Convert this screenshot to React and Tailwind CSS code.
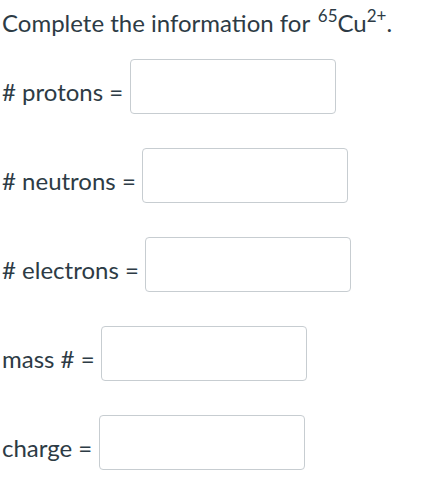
const rows = [
  { label: "# protons =", gap: "ml-[7px]" },
  { label: "# neutrons =", gap: "ml-[6px]" },
  { label: "# electrons =", gap: "ml-[6px]" },
  { label: "mass # =", gap: "ml-[6px]" },
  { label: "charge =", gap: "ml-[7px]" },
]

export default function App() {
  return (
    <div className="min-h-screen bg-white pl-[2px] pt-[5px] text-[#2d3b45] font-['Lato','Noto_Sans',sans-serif]">
      <p className="text-[24px] leading-[36px]">
        Complete the information for <sup className="ml-[2px] text-[17px] top-[-10px]">65</sup>Cu
        <sup className="text-[17px] top-[-10px]">2+</sup>.
      </p>

      <div className="mt-[18px] flex flex-col gap-[34px]">
        {rows.map((row) => (
          <div key={row.label} className="flex items-end">
            <span className="text-[24px] leading-[36px] pb-[4px] whitespace-nowrap">{row.label}</span>
            <input
              type="text"
              aria-label={row.label}
              className={`${row.gap} h-[55px] w-[206px] rounded-[4px] border border-[#c7cdd1] bg-white`}
            />
          </div>
        ))}
      </div>
    </div>
  )
}
